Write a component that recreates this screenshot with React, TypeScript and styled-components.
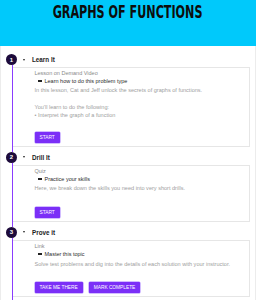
import React from 'react';
import styled, { createGlobalStyle } from 'styled-components';

const GlobalStyle = createGlobalStyle`
  html, body {
    margin: 0;
    padding: 0;
    background: #ffffff;
    font-family: 'Liberation Sans', Arial, sans-serif;
  }
`;

const Page = styled.div`
  width: 256px;
`;

const Header = styled.header`
  height: 46px;
  box-sizing: border-box;
  padding-top: 3px;
  background-color: #00c9fb;
  text-align: center;
`;

const Title = styled.h1`
  display: inline-block;
  margin: 0;
  font-family: 'Liberation Sans Narrow', 'DejaVu Sans Condensed', 'Liberation Sans', sans-serif;
  font-weight: bold;
  font-size: 18px;
  line-height: 18px;
  color: #0d0d0d;
  transform: scaleX(0.69);
  white-space: nowrap;
`;

const Steps = styled.div`
  box-sizing: border-box;
  width: 256px;
  padding: 8px 5px 0 0;
  border-left: 1px solid #ececec;
  border-right: 1px solid #ececec;
`;

const StepHeader = styled.div`
  display: flex;
  align-items: center;
  height: 11px;
`;

const Circle = styled.span`
  display: flex;
  align-items: center;
  justify-content: center;
  width: 11px;
  height: 11px;
  margin-left: 5px;
  border-radius: 50%;
  background-color: #1d0b3b;
  color: #ffffff;
  font-size: 6px;
  font-weight: bold;
`;

const Caret = styled.span`
  width: 0;
  height: 0;
  margin-left: 6px;
  border-left: 1.8px solid transparent;
  border-right: 1.8px solid transparent;
  border-top: 2.2px solid #222;
`;

const StepTitle = styled.span`
  margin-left: 7px;
  font-size: 6.3px;
  font-weight: bold;
  color: #222;
`;

const StepBody = styled.div`
  margin-left: 10.5px;
  padding: 2px 0 5px 0;
  border-left: 1.5px solid #8a3cff;
`;

const Card = styled.div`
  padding: 1px 8px 3px 22px;
  border: 1px solid #e6e6e6;
  border-left: none;
  line-height: 8px;
`;

const Label = styled.div`
  font-size: 5.5px;
  color: #8a8a8a;
`;

const Bullet = styled.div`
  display: flex;
  align-items: center;
  padding-left: 3px;
  font-size: 5.5px;
  color: #2a2a2a;
`;

const Dash = styled.span`
  width: 4px;
  height: 1.2px;
  margin-right: 3px;
  background-color: #222;
`;

const Text = styled.p<{ $gap?: number }>`
  margin: ${(p) => p.$gap ?? 1}px 0 0 0;
  font-size: 5.55px;
  color: #a0a0a0;
`;

const Actions = styled.div<{ $gap: number }>`
  display: flex;
  gap: 6px;
  margin-top: ${(p) => p.$gap}px;
`;

const Button = styled.button`
  height: 11px;
  padding: 0 5px;
  border: none;
  border-radius: 1px;
  background-color: #7b2ff7;
  color: #ffffff;
  font-family: 'Liberation Sans', Arial, sans-serif;
  font-size: 4.8px;
  text-transform: uppercase;
  box-shadow: 0 0 0 0.5px #a57cff;
  cursor: pointer;
`;

type Step = {
  num: number;
  title: string;
  label: string;
  bullet: string;
  text: React.ReactNode;
  buttons: string[];
  gap: number;
};

const steps: Step[] = [
  {
    num: 1,
    title: 'Learn It',
    label: 'Lesson on Demand Video',
    bullet: 'Learn how to do this problem type',
    text: (
      <>
        <Text>In this lesson, Cat and Jeff unlock the secrets of graphs of functions.</Text>
        <Text $gap={8.7}>
          You'll learn to do the following:
          <br />• Interpret the graph of a function
        </Text>
      </>
    ),
    buttons: ['Start'],
    gap: 13.3,
  },
  {
    num: 2,
    title: 'Drill It',
    label: 'Quiz',
    bullet: 'Practice your skills',
    text: <Text>Here, we break down the skills you need into very short drills.</Text>,
    buttons: ['Start'],
    gap: 15,
  },
  {
    num: 3,
    title: 'Prove it',
    label: 'Link',
    bullet: 'Master this topic',
    text: (
      <Text $gap={2}>
        Solve test problems and dig into the details of each solution with your instructor.
      </Text>
    ),
    buttons: ['Take me there', 'Mark complete'],
    gap: 14,
  },
];

export default function App(): JSX.Element {
  return (
    <Page>
      <GlobalStyle />
      <Header>
        <Title>GRAPHS OF FUNCTIONS</Title>
      </Header>
      <Steps>
        {steps.map((step) => (
          <section key={step.num}>
            <StepHeader>
              <Circle>{step.num}</Circle>
              <Caret />
              <StepTitle>{step.title}</StepTitle>
            </StepHeader>
            <StepBody>
              <Card>
                <Label>{step.label}</Label>
                <Bullet>
                  <Dash />
                  {step.bullet}
                </Bullet>
                {step.text}
                <Actions $gap={step.gap}>
                  {step.buttons.map((b) => (
                    <Button key={b}>{b}</Button>
                  ))}
                </Actions>
              </Card>
            </StepBody>
          </section>
        ))}
      </Steps>
    </Page>
  );
}
